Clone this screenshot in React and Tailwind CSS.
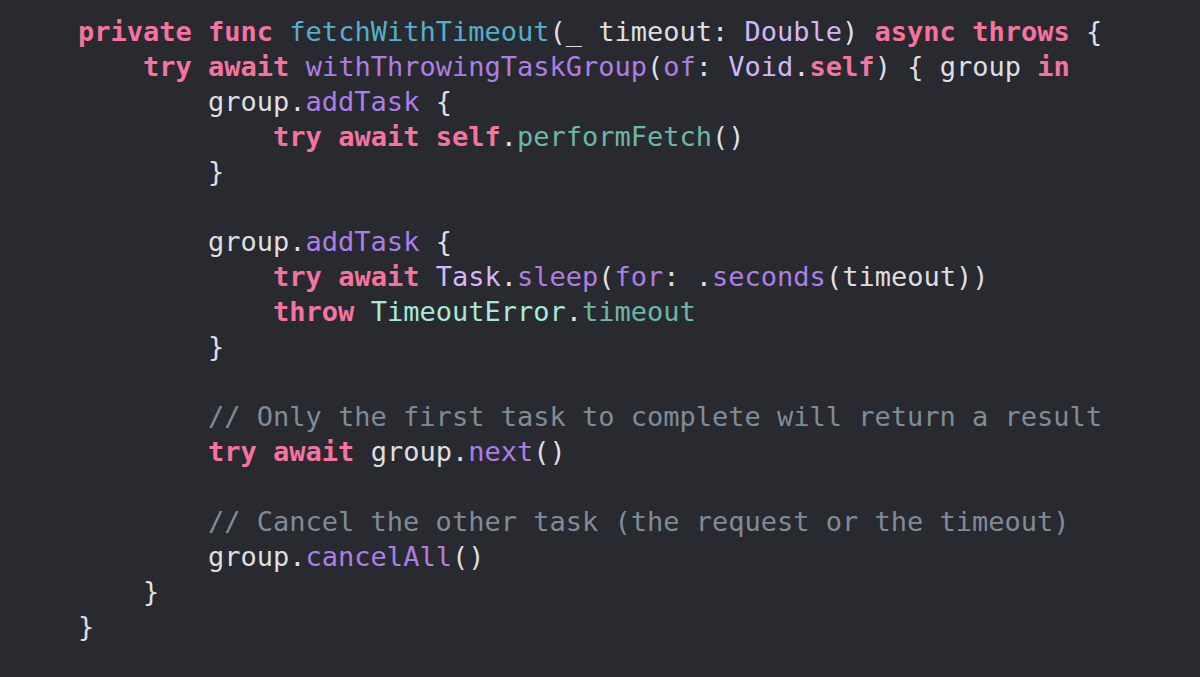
import React from "react";

const K = ({ children }) => <span className="text-[#F4749F] font-bold">{children}</span>;
const P = ({ children }) => <span className="text-[#AD7EE6]">{children}</span>;
const T = ({ children }) => <span className="text-[#D3B7F7]">{children}</span>;
const D = ({ children }) => <span className="text-[#56AFCB]">{children}</span>;
const G = ({ children }) => <span className="text-[#6BB8A6]">{children}</span>;
const M = ({ children }) => <span className="text-[#A3EAD8]">{children}</span>;
const C = ({ children }) => <span className="text-[#7F8C98]">{children}</span>;

const lines = [
  <><K>private</K> <K>func</K> <D>fetchWithTimeout</D>(_ timeout: <T>Double</T>) <K>async</K> <K>throws</K> {"{"}</>,
  <>{"    "}<K>try</K> <K>await</K> <P>withThrowingTaskGroup</P>(<P>of</P>: <T>Void</T>.<K>self</K>) {"{"} group <K>in</K></>,
  <>{"        "}group.<P>addTask</P> {"{"}</>,
  <>{"            "}<K>try</K> <K>await</K> <K>self</K>.<G>performFetch</G>()</>,
  <>{"        }"}</>,
  <>{" "}</>,
  <>{"        "}group.<P>addTask</P> {"{"}</>,
  <>{"            "}<K>try</K> <K>await</K> <T>Task</T>.<P>sleep</P>(<P>for</P>: .<P>seconds</P>(timeout))</>,
  <>{"            "}<K>throw</K> <M>TimeoutError</M>.<G>timeout</G></>,
  <>{"        }"}</>,
  <>{" "}</>,
  <>{"        "}<C>// Only the first task to complete will return a result</C></>,
  <>{"        "}<K>try</K> <K>await</K> group.<P>next</P>()</>,
  <>{" "}</>,
  <>{"        "}<C>// Cancel the other task (the request or the timeout)</C></>,
  <>{"        "}group.<P>cancelAll</P>()</>,
  <>{"    }"}</>,
  <>{"}"}</>,
];

export default function App() {
  return (
    <div className="w-[1200px] h-[677px] bg-[#292A30] overflow-hidden pt-[14px] pl-[78px]">
      <pre
        className="text-[#DFDFE0] text-[27px] leading-[35px] whitespace-pre m-0"
        style={{ fontFamily: '"DejaVu Sans Mono", "Liberation Mono", monospace' }}
      >
        {lines.map((l, i) => (
          <div key={i}>{l}</div>
        ))}
      </pre>
    </div>
  );
}
